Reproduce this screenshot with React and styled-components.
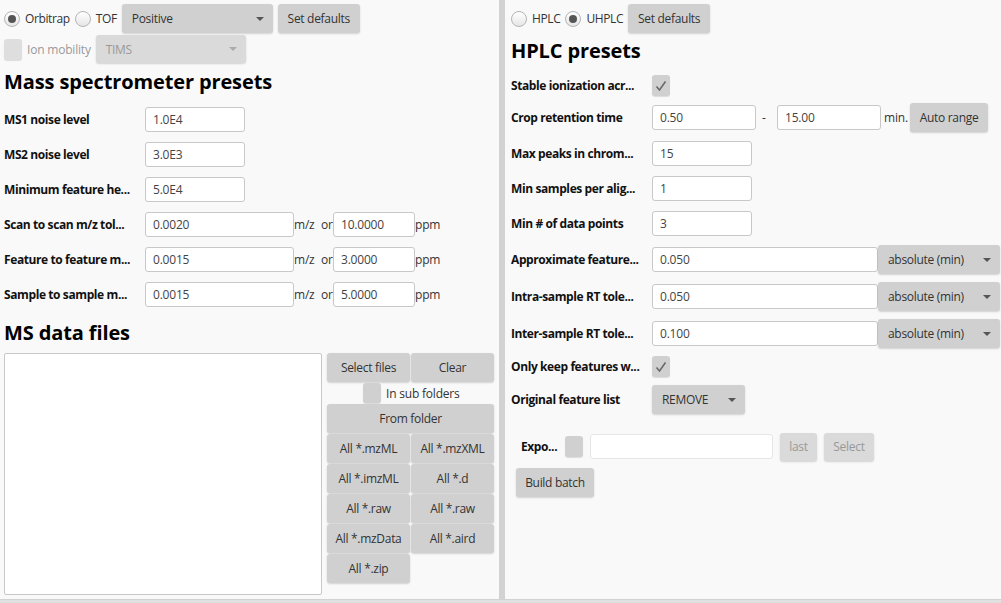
import React from "react";
import styled, { createGlobalStyle } from "styled-components";

const Global = createGlobalStyle`
  html, body { margin: 0; padding: 0; height: 100%; overflow: hidden; }
  body { background: #f9f9f9; font-family: "Open Sans", "Noto Sans", sans-serif; font-size: 12px; color: #333; }
`;

const Page = styled.div`
  width: 1001px;
  height: 603px;
  display: grid;
  grid-template-columns: 499px 6px 496px;
  grid-template-rows: 599px 4px;
`;

const Panel = styled.div`
  display: flex;
  flex-direction: column;
  padding: 4px 0 0 ${p => p.$left || 4}px;
  min-width: 0;
`;

const Divider = styled.div`
  background: #d2d2d2;
`;

const Footer = styled.div`
  grid-column: 1 / 4;
  background: #e0e0e0;
  border-top: 1px solid #d2d2d2;
`;

const Bar = styled.div`
  display: flex;
  align-items: center;
  gap: ${p => p.$gap ?? 5}px;
  height: ${p => p.$h || 29}px;
  margin-top: ${p => p.$top || 0}px;
  margin-left: ${p => p.$indent || 0}px;
`;

const Title = styled.h1`
  margin: ${p => p.$top}px 0 ${p => p.$bottom}px 0;
  height: 28px;
  line-height: 28px;
  font-size: 20px;
  font-weight: 700;
  color: #000;
  letter-spacing: -0.12px;
`;

const Radio = styled.span`
  width: 16px;
  height: 16px;
  border-radius: 50%;
  box-sizing: border-box;
  border: 1px solid #b4b4b4;
  background: linear-gradient(#fff, #e6e6e6);
  display: inline-flex;
  align-items: center;
  justify-content: center;
  flex: none;
  &::after {
    content: "";
    width: 8px;
    height: 8px;
    border-radius: 50%;
    background: ${p => (p.$on ? "#555" : "transparent")};
  }
`;

const Option = styled.label`
  display: inline-flex;
  align-items: center;
  gap: 5px;
  letter-spacing: -0.38px;
`;

const Button = styled.button`
  box-sizing: border-box;
  width: ${p => (p.$w ? `${p.$w}px` : "auto")};
  height: ${p => p.$h || 29}px;
  flex: none;
  padding: 0;
  border: 0;
  border-radius: 3px;
  background: ${p => (p.$off ? "#dadada" : "#d0d0d0")};
  box-shadow: 0 1px 2px rgba(0, 0, 0, 0.16);
  color: ${p => (p.$off ? "#999" : "#333")};
  font: inherit;
  letter-spacing: -0.3px;
  white-space: nowrap;
`;

const Drop = styled(Button)`
  display: inline-flex;
  align-items: center;
  justify-content: space-between;
  padding: 0 9px 0 10px;
  &::after {
    content: "";
    border-left: 4px solid transparent;
    border-right: 4px solid transparent;
    border-top: 4px solid ${p => (p.$off ? "#aaa" : "#555")};
  }
`;

const Check = styled.span`
  box-sizing: border-box;
  width: 18px;
  height: ${p => p.$h || 21}px;
  flex: none;
  border-radius: 3px;
  background: ${p => (p.$off ? "#dedede" : "#d0d0d0")};
  box-shadow: 0 1px 1px rgba(0, 0, 0, 0.12);
  display: inline-flex;
  align-items: center;
  justify-content: center;
`;

const Tick = () => (
  <svg width="12" height="12" viewBox="0 0 12 12" fill="none">
    <path d="M1.5 6.5 L4.5 10 L10.5 1.5" stroke="#666" strokeWidth="1.5" />
  </svg>
);

const Input = styled.div`
  box-sizing: border-box;
  width: ${p => p.$w}px;
  height: 25px;
  flex: none;
  padding: 0 7px;
  line-height: 23px;
  background: #fff;
  border: 1px solid ${p => (p.$off ? "#e6e6e6" : "#c8c8c8")};
  border-radius: 3px;
  letter-spacing: -0.2px;
  color: #444;
`;

const Row = styled.div`
  display: flex;
  align-items: center;
  height: ${p => p.$h || 25}px;
  margin-bottom: ${p => p.$gap ?? 10}px;
`;

const Label = styled.span`
  width: ${p => p.$w}px;
  flex: none;
  font-weight: 700;
  color: #111;
  letter-spacing: -0.4px;
  white-space: nowrap;
  overflow: hidden;
`;

const Unit = styled.span`
  flex: none;
  box-sizing: border-box;
  width: ${p => p.$w}px;
  padding-left: ${p => p.$pad || 0}px;
  letter-spacing: -0.2px;
  white-space: nowrap;
`;

const Files = styled.div`
  display: flex;
  gap: 5px;
`;

const FileList = styled.div`
  box-sizing: border-box;
  width: 318px;
  height: 242px;
  background: #fff;
  border: 1px solid #c8c8c8;
  border-radius: 2px;
`;

const FileButtons = styled.div`
  display: grid;
  grid-template-columns: 83px 83px;
  grid-template-rows: 29px 20px;
  grid-auto-rows: 29px;
  align-content: start;
  gap: 1px;
  width: 167px;
`;

const Wide = styled(Button)`
  grid-column: 1 / 3;
  width: 100%;
`;

const Sub = styled.div`
  grid-column: 1 / 3;
  height: 20px;
  display: flex;
  align-items: center;
  gap: 5px;
  padding-left: 36px;
  letter-spacing: -0.2px;
`;

const Dim = styled.span`
  color: #999;
  letter-spacing: -0.2px;
  white-space: nowrap;
`;

const massRows = [
  ["MS1 noise level", "1.0E4"],
  ["MS2 noise level", "3.0E3"],
  ["Minimum feature he...", "5.0E4"],
];

const tolRows = [
  ["Scan to scan m/z tol...", "0.0020", "10.0000"],
  ["Feature to feature m...", "0.0015", "3.0000"],
  ["Sample to sample m...", "0.0015", "5.0000"],
];

const peakRows = [
  ["Max peaks in chrom...", "15", 10],
  ["Min samples per alig...", "1", 10],
  ["Min # of data points", "3", 11],
];

const rtRows = [
  ["Approximate feature...", "0.050", 12],
  ["Intra-sample RT tole...", "0.050", 12],
  ["Inter-sample RT tole...", "0.100", 10],
];

const fileButtons = ["All *.mzML", "All *.mzXML", "All *.imzML", "All *.d", "All *.raw", "All *.raw", "All *.mzData", "All *.aird", "All *.zip"];

export default function App() {
  return (
    <Page>
      <Global />
      <Panel>
        <Bar>
          <Option><Radio $on />Orbitrap</Option>
          <Option><Radio />TOF</Option>
          <Drop $w={151}>Positive</Drop>
          <Button $w={82}>Set defaults</Button>
        </Bar>
        <Bar $top={2} $h={28}>
          <Check $off />
          <Dim>Ion mobility</Dim>
          <Drop $w={150} $h={28} $off>TIMS</Drop>
        </Bar>
        <Title $top={5} $bottom={11}>Mass spectrometer presets</Title>
        {massRows.map(([label, value]) => (
          <Row key={label}>
            <Label $w={141}>{label}</Label>
            <Input $w={100}>{value}</Input>
          </Row>
        ))}
        {tolRows.map(([label, mz, ppm]) => (
          <Row key={label}>
            <Label $w={141}>{label}</Label>
            <Input $w={149}>{mz}</Input>
            <Unit $w={27}>m/z</Unit>
            <Unit $w={12}>or</Unit>
            <Input $w={82}>{ppm}</Input>
            <Unit $w={24}>ppm</Unit>
          </Row>
        ))}
        <Title $top={2} $bottom={6}>MS data files</Title>
        <Files>
          <FileList />
          <FileButtons>
            <Button>Select files</Button>
            <Button>Clear</Button>
            <Sub><Check $h={20} /><span>In sub folders</span></Sub>
            <Wide>From folder</Wide>
            {fileButtons.map((name, i) => (
              <Button key={i}>{name}</Button>
            ))}
          </FileButtons>
        </Files>
      </Panel>
      <Divider />
      <Panel $left={6}>
        <Bar>
          <Option><Radio />HPLC</Option>
          <Option><Radio $on />UHPLC</Option>
          <Button $w={82}>Set defaults</Button>
        </Bar>
        <Title $top={4} $bottom={10}>HPLC presets</Title>
        <Row $h={21} $gap={9}>
          <Label $w={141}>Stable ionization acr...</Label>
          <Check><Tick /></Check>
        </Row>
        <Row $gap={11}>
          <Label $w={141}>Crop retention time</Label>
          <Input $w={104}>0.50</Input>
          <Unit $w={21} $pad={6}>-</Unit>
          <Input $w={104}>15.00</Input>
          <Unit $w={29} $pad={3}>min.</Unit>
          <Button $w={78}>Auto range</Button>
        </Row>
        {peakRows.map(([label, value, gap]) => (
          <Row key={label} $gap={gap}>
            <Label $w={141}>{label}</Label>
            <Input $w={100}>{value}</Input>
          </Row>
        ))}
        {rtRows.map(([label, value, gap]) => (
          <Row key={label} $gap={gap}>
            <Label $w={141}>{label}</Label>
            <Input $w={226}>{value}</Input>
            <Drop $w={122}>absolute (min)</Drop>
          </Row>
        ))}
        <Row $h={21} $gap={8}>
          <Label $w={141}>Only keep features w...</Label>
          <Check><Tick /></Check>
        </Row>
        <Row $h={29} $gap={18}>
          <Label $w={141}>Original feature list</Label>
          <Drop $w={93}>REMOVE</Drop>
        </Row>
        <Bar $indent={10} $gap={7}>
          <Label $w={37}>Expo...</Label>
          <Check />
          <Input $w={183} $off />
          <Button $w={37} $h={28} $off>last</Button>
          <Button $w={50} $h={28} $off>Select</Button>
        </Bar>
        <Bar $top={7} $indent={5}>
          <Button $w={78}>Build batch</Button>
        </Bar>
      </Panel>
      <Footer />
    </Page>
  );
}
